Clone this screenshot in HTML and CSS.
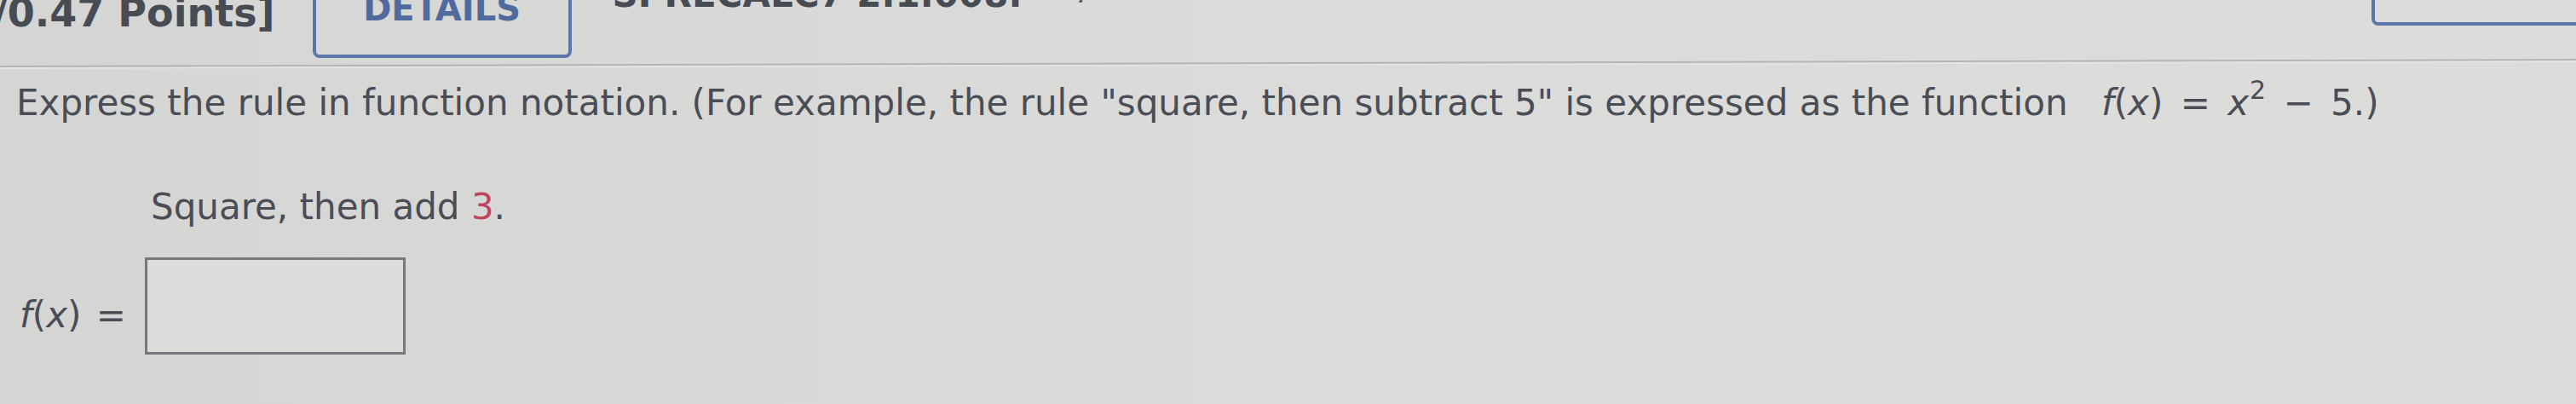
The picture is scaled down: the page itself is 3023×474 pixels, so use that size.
FILE: index.html
```html
<!DOCTYPE html>
<html>
<head>
<meta charset="utf-8">
<link rel="stylesheet" href="styles.css">
</head>
<body>
<div class="page">
  <div class="header">
    <span class="points">/0.47 Points]</span>
    <span class="details">DETAILS</span>
    <span class="meta">
      <span class="code">SPRECALC7 2.1.008.</span>
      <span class="subs">0/5 Submissions Used</span>
    </span>
    <span class="spacer"></span>
    <span class="right-btn"></span>
  </div>
  <div class="divider"></div>
  <div class="question">
    <p class="prompt">Express the rule in function notation. (For example, the rule "square, then subtract 5" is expressed as the function <span class="math"><i>f</i>(<i>x</i>) = <i>x</i><sup>2</sup> − 5</span>.)</p>
    <p class="rule">Square, then add <span class="red">3</span>.</p>
    <div class="answer">
      <span class="label"><i>f</i>(<i>x</i>) =</span>
      <span class="box"></span>
    </div>
  </div>
</div>
</body>
</html>
```
FILE: styles.css
```css
html, body {
  margin: 0;
  padding: 0;
}
body {
  width: 3023px;
  height: 474px;
  overflow: hidden;
  background: linear-gradient(90deg, #d5d5d4 0%, #dbdbda 50%, #dcdcdb 100%);
  font-family: "DejaVu Sans", Verdana, sans-serif;
  color: #4a4d55;
}
.page {
  position: relative;
  height: 474px;
}
.header {
  display: flex;
  align-items: flex-end;
  height: 68px;
}
.points {
  font-weight: bold;
  font-size: 46px;
  line-height: 1;
  margin-left: -8px;
  margin-bottom: 30px;
  color: #474b54;
}
.details {
  box-sizing: border-box;
  width: 304px;
  height: 120px;
  margin-left: 44px;
  border: 4px solid #5d76aa;
  border-radius: 0 0 8px 8px;
  display: flex;
  align-items: flex-end;
  justify-content: center;
  padding-bottom: 34px;
  font-weight: bold;
  font-size: 40px;
  line-height: 1;
  color: #516a9e;
}
.meta {
  display: flex;
  align-items: flex-end;
  margin-left: 48px;
  margin-bottom: 53px;
  font-size: 42px;
  line-height: 1;
}
.code {
  font-weight: bold;
  color: #474b54;
}
.subs {
  margin-left: 40px;
  color: #5a5d64;
  margin-bottom: 9px;
}
.spacer {
  flex: 1;
}
.right-btn {
  box-sizing: border-box;
  width: 260px;
  height: 80px;
  margin-right: -20px;
  margin-bottom: 38px;
  border: 4px solid #5d76aa;
  border-radius: 0 0 8px 8px;
}
.divider {
  height: 2px;
  margin-top: 9px;
  background: #b5b5b4;
  box-shadow: 0 2px 0 #e4e4e3;
  transform: rotate(-0.15deg);
  transform-origin: left center;
}
.question {
  padding-left: 19px;
}
.prompt {
  margin: 18px 0 0 0;
  font-size: 42px;
  line-height: 48px;
  white-space: nowrap;
}
.math {
  margin-left: 26px;
  word-spacing: 7px;
}
.math i,
.label i {
  font-style: italic;
}
.math sup {
  font-size: 30px;
  line-height: 0;
  vertical-align: 19px;
  margin-left: 1px;
}
.rule {
  margin: 74px 0 0 158px;
  font-size: 42px;
  line-height: 48px;
}
.red {
  color: #c0455f;
}
.answer {
  display: flex;
  align-items: flex-end;
  margin-top: 35px;
}
.label {
  margin-left: 4px;
  margin-bottom: 22px;
  font-size: 42px;
  line-height: 48px;
  word-spacing: 4px;
}
.box {
  box-sizing: border-box;
  width: 306px;
  height: 114px;
  margin-left: 22px;
  border: 3px solid #77787e;
  background: #dcdcdb;
}
```
